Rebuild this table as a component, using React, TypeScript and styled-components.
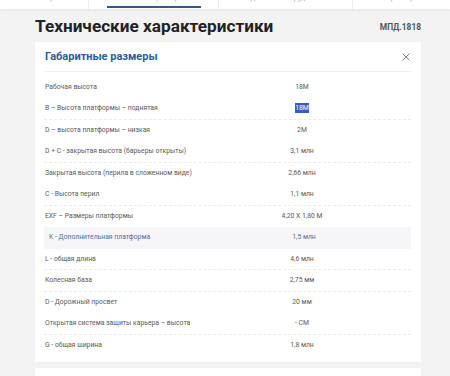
import React from "react";
import styled, { createGlobalStyle } from "styled-components";

// Строки таблицы габаритов
const ROWS: SpecRow[] = [
  { label: "Рабочая высота", value: "18M" },
  { label: "B – Высота платформы – поднятая", value: "18M", selected: true, divider: true },
  { label: "D – высота платформы – низкая", value: "2M" },
  { label: "D + C - закрытая высота (барьеры открыты)", value: "3,1 млн", divider: true },
  { label: "Закрытая высота (перила в сложенном виде)", value: "2,66 млн" },
  { label: "C - Высота перил", value: "1,1 млн", divider: true },
  { label: "EXF – Размеры платформы", value: "4,20 X 1,80 M" },
  { label: "K - Дополнительная платформа", value: "1,5 млн", accent: true },
  { label: "L - общая длина", value: "4,6 млн", divider: true },
  { label: "Колесная база", value: "2,75 мм", divider: true },
  { label: "D - Дорожный просвет", value: "20 мм" },
  { label: "Открытая система защиты карьера – высота", value: "- СМ", divider: true },
  { label: "G - общая ширина", value: "1,8 млн" },
];

const TABS = [
  { title: "Обзор", width: 88 },
  { title: "Технические характеристики", width: 129, active: true },
  { title: "Подъемное оборудование", width: 133 },
  { title: "Брошюры", width: 100 },
];

const App: React.FC = () => {
  return (
    <>
      <GlobalStyle />
      <Page>
        <TopNav>
          {TABS.map((tab) => (
            <Tab key={tab.title} $width={tab.width} $active={tab.active}>
              <TabText>{tab.title}</TabText>
            </Tab>
          ))}
        </TopNav>

        <Content>
          <TitleRow>
            <Title>Технические характеристики</Title>
            <Model>МПД.1818</Model>
          </TitleRow>

          <Card>
            <CardHeader>
              <CardTitle>Габаритные размеры</CardTitle>
              <CloseButton aria-label="Закрыть">
                <svg width="8" height="8" viewBox="0 0 8 8">
                  <path d="M0.5 0.5 L7.5 7.5 M7.5 0.5 L0.5 7.5" stroke="#777" strokeWidth="0.9" />
                </svg>
              </CloseButton>
            </CardHeader>

            <SpecList>
              {ROWS.map((row) => (
                <Row key={row.label} $divider={row.divider} $accent={row.accent}>
                  <Label>{row.label}</Label>
                  <Value>{row.selected ? <Selected>{row.value}</Selected> : row.value}</Value>
                </Row>
              ))}
            </SpecList>
          </Card>

          <NextCard />
        </Content>
      </Page>
    </>
  );
};

export default App;

interface SpecRow {
  label: string;
  value: string;
  selected?: boolean;
  divider?: boolean;
  accent?: boolean;
}

const GlobalStyle = createGlobalStyle`
  body {
    margin: 0;
    background-color: #f3f3f3;
    font-family: Roboto, "Liberation Sans", sans-serif;
  }
`;

const Page = styled.div`
  width: 450px;
  height: 376px;
  overflow: hidden;
  background-color: #f3f3f3;
`;

const TopNav = styled.nav`
  display: flex;
  height: 9px;
  background-color: #fff;
  box-shadow: 0 1px 3px rgba(0, 0, 0, 0.07);
  overflow: hidden;
  position: relative;
  z-index: 1;
`;

const Tab = styled.div<{ $width: number; $active?: boolean }>`
  position: relative;
  flex: 0 0 ${(p) => p.$width}px;
  display: flex;
  justify-content: center;
  align-items: flex-end;
  border-right: 1px solid #ececec;

  &:last-child {
    border-right: none;
  }

  ${(p) =>
    p.$active &&
    `
    &::after {
      content: "";
      position: absolute;
      left: 18px;
      width: 94px;
      top: 6px;
      height: 2px;
      background-color: #2f5d8a;
    }
  `}
`;

const TabText = styled.span`
  font-size: 7px;
  color: #aaa;
  white-space: nowrap;
  line-height: 8px;
  margin-bottom: 7px;
`;

const Content = styled.main`
  padding: 0 29px 0 35px;
`;

const TitleRow = styled.div`
  display: flex;
  justify-content: space-between;
  align-items: center;
  height: 33px;
`;

const Title = styled.h1`
  margin: 0;
  font-size: 17.2px;
  font-weight: 700;
  color: #222;
`;

const Model = styled.span`
  font-size: 8.4px;
  font-weight: 700;
  color: #555;
  margin-top: 2px;
`;

const Card = styled.section`
  background-color: #fff;
  padding: 0 10px 6px 9px;
  box-shadow: 0 0 4px rgba(0, 0, 0, 0.03);
`;

const CardHeader = styled.div`
  display: flex;
  justify-content: space-between;
  align-items: center;
  height: 29px;
  margin-left: 1px;
  border-bottom: 1px solid #efefef;
`;

const CardTitle = styled.h2`
  margin: 0;
  font-size: 11px;
  font-weight: 700;
  color: #2c5e9c;
`;

const CloseButton = styled.button`
  display: flex;
  padding: 0;
  margin-right: 1px;
  border: none;
  background: none;
  cursor: pointer;
`;

const SpecList = styled.div`
  padding-top: 4.5px;
`;

const Row = styled.div<{ $divider?: boolean; $accent?: boolean }>`
  display: grid;
  grid-template-columns: 148px 1fr;
  align-items: center;
  height: 21.5px;
  box-sizing: border-box;
  font-size: 6.8px;
  color: ${(p) => (p.$accent ? "#4a6fa0" : "#5a5a5a")};
  background-color: ${(p) => (p.$accent ? "#f6f6f8" : "transparent")};
  border-bottom: 1px dashed ${(p) => (p.$divider ? "#ececec" : "transparent")};
  padding-left: ${(p) => (p.$accent ? "5px" : "1px")};
`;

const Label = styled.span`
  white-space: nowrap;
`;

const Value = styled.span`
  text-align: center;
  white-space: nowrap;
`;

const Selected = styled.span`
  background-color: #2f62c0;
  color: #fff;
  padding: 1px 0;
`;

const NextCard = styled.div`
  margin-top: 6px;
  height: 20px;
  background-color: #fff;
`;
